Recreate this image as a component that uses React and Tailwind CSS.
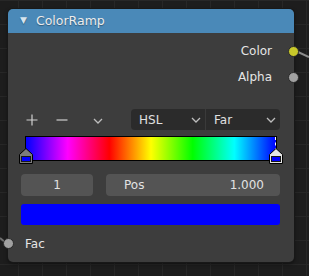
import React from 'react';

const font = { fontFamily: '"DejaVu Sans", "Liberation Sans", sans-serif' };

const Chevron = ({ className = '' }) => (
    <svg width="10" height="6" viewBox="0 0 10 6" className={className}>
        <path d="M1 1 L5 5 L9 1" fill="none" stroke="#bdbdbd" strokeWidth="1.3" />
    </svg>
);

const Marker = ({ active }) => (
    <svg width="14" height="16" viewBox="0 0 14 16">
        <path
            d="M0.5 15.5 V6.5 L7 0.5 L13.5 6.5 V15.5 Z"
            fill={active ? '#e6e6e6' : '#7c7c7c'}
            stroke="#000"
            strokeWidth="1"
        />
        <rect x="2.5" y="8.5" width="9" height="5" fill="#0000ff" stroke="#1a1a1a" strokeWidth="1" />
    </svg>
);

const Socket = ({ color, className }) => (
    <span
        className={`absolute w-[11px] h-[11px] rounded-full border border-[#2a2a2a] ${className}`}
        style={{ background: color }}
    />
);

export default function App() {
    return (
        <div
            className="relative w-[309px] h-[276px] overflow-hidden bg-[#1d1d1d] bg-[linear-gradient(to_right,#272727_1px,transparent_1px),linear-gradient(to_bottom,#272727_1px,transparent_1px)] bg-[size:24px_24px] bg-[position:18px_0px] pt-[9px] pl-[8px]"
            style={font}
        >
            {/* links */}
            <svg className="absolute left-0 top-0" width="309" height="276">
                <path d="M298 52 L309 57" stroke="#8c8c8c" strokeWidth="2" fill="none" />
                <path d="M0 238 L6 243" stroke="#6e6e6e" strokeWidth="2" fill="none" />
            </svg>

            {/* node */}
            <div className="relative w-[286px] h-[253px] rounded-[5px] bg-[#3d3d3d] shadow-[0_0_0_1px_#181818,0_2px_4px_rgba(0,0,0,0.5)] flex flex-col">
                {/* header */}
                <div className="h-[24px] shrink-0 rounded-t-[5px] bg-[#4a89b8] flex items-center pl-[12px] gap-[9px] text-[12.5px] text-[#ececec] [text-shadow:0_1px_1px_rgba(0,0,0,0.35)]">
                    <span className="text-[9px] text-[#d6e4ee]">▼</span>
                    <span>ColorRamp</span>
                </div>

                {/* outputs */}
                <div className="mt-[5px] h-[26px] flex items-center justify-end pr-[22px] text-[12px] text-[#e6e6e6]">Color</div>
                <div className="h-[26px] flex items-center justify-end pr-[22px] text-[12px] text-[#e6e6e6]">Alpha</div>

                {/* ramp controls */}
                <div className="mt-[19px] h-[21px] flex items-center">
                    <div className="w-[123px] flex items-center">
                        <svg width="12" height="12" viewBox="0 0 12 12" className="ml-[18px]">
                            <path d="M6 0.5 V11.5 M0.5 6 H11.5" stroke="#d0d0d0" strokeWidth="1.2" />
                        </svg>
                        <svg width="12" height="12" viewBox="0 0 12 12" className="ml-[18px]">
                            <path d="M0.5 6 H11.5" stroke="#d0d0d0" strokeWidth="1.2" />
                        </svg>
                        <Chevron className="ml-[25px] mt-[2px]" />
                    </div>
                    <div className="w-[149px] h-[21px] flex rounded-[4px] bg-[#2b2b2b] text-[12px] text-[#e0e0e0]">
                        <div className="flex-1 flex items-center justify-between pl-[8px] pr-[4px] border-r border-[#3a3a3a]">
                            <span>HSL</span>
                            <Chevron />
                        </div>
                        <div className="flex-1 flex items-center justify-between pl-[8px] pr-[4px]">
                            <span>Far</span>
                            <Chevron />
                        </div>
                    </div>
                </div>

                {/* gradient */}
                <div className="mt-[6px] ml-[17px] relative w-[252px] h-[25px] border border-black bg-[linear-gradient(to_right,#0000ff,#ff00ff,#ff0000,#ffff00,#00ff00,#00ffff,#0000ff)]">
                    <div className="absolute right-[0px] top-0 h-[14px] border-r border-dashed border-white" />
                    <div className="absolute left-[-7px] top-[11px]">
                        <Marker />
                    </div>
                    <div className="absolute right-[-7px] top-[11px]">
                        <Marker active />
                    </div>
                </div>

                {/* fields */}
                <div className="mt-[13px] h-[22px] flex text-[12px] text-[#e2e2e2]">
                    <div className="ml-[13px] w-[72px] rounded-[4px] bg-[#545454] flex items-center justify-center">1</div>
                    <div className="ml-[13px] w-[174px] rounded-[4px] bg-[#545454] flex items-center justify-between pl-[18px] pr-[16px]">
                        <span>Pos</span>
                        <span>1.000</span>
                    </div>
                </div>

                {/* swatch */}
                <div className="mt-[8px] ml-[13px] w-[259px] h-[21px] rounded-[3px] bg-[#0000ff]" />

                {/* input */}
                <div className="mt-[7px] h-[24px] flex items-center pl-[17px] text-[12px] text-[#e6e6e6]">Fac</div>

                <Socket color="#c8c82a" className="left-[280px] top-[37px]" />
                <Socket color="#a1a1a1" className="left-[280px] top-[63px]" />
                <Socket color="#a1a1a1" className="left-[-5px] top-[229px]" />
            </div>
        </div>
    );
}
